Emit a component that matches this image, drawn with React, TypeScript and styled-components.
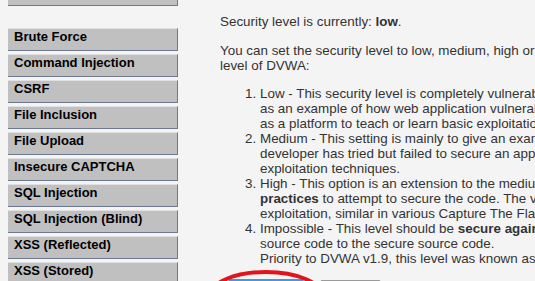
import styled, { createGlobalStyle } from "styled-components";

const GlobalStyle = createGlobalStyle`
  html, body {
    margin: 0;
    height: 100%;
    overflow: hidden;
    background: #f4f4f4;
  }
`;

const setupMenu = ["Setup / Reset DB"];
const vulnMenu = [
  "Brute Force",
  "Command Injection",
  "CSRF",
  "File Inclusion",
  "File Upload",
  "Insecure CAPTCHA",
  "SQL Injection",
  "SQL Injection (Blind)",
  "XSS (Reflected)",
  "XSS (Stored)",
];

function App() {
  return (
    <>
      <GlobalStyle />
      <Page>
        <Menu>
          <MenuBlock>
            {setupMenu.map(item => (
              <li key={item}><MenuItem href="#">{item}</MenuItem></li>
            ))}
          </MenuBlock>
          <MenuBlock>
            {vulnMenu.map(item => (
              <li key={item}><MenuItem href="#">{item}</MenuItem></li>
            ))}
          </MenuBlock>
        </Menu>

        <Body>
          <Para>Security level is currently: <b>low</b>.</Para>
          <Para>
            You can set the security level to low, medium, high or impossible. The security level changes the vulnerability<br />
            level of DVWA:
          </Para>
          <Levels>
            <li>
              Low - This security level is completely vulnerable and has no security measures at all. It's use is to be<br />
              as an example of how web application vulnerabilities manifest through bad coding practices and to serve<br />
              as a platform to teach or learn basic exploitation techniques.
            </li>
            <li>
              Medium - This setting is mainly to give an example to the user of bad security practices, where the<br />
              developer has tried but failed to secure an application. It also acts as a challenge to users to refine their<br />
              exploitation techniques.
            </li>
            <li>
              High - This option is an extension to the medium difficulty, with a mixture of harder or alternative <b>bad</b><br />
              <b>practices</b> to attempt to secure the code. The vulnerability may not allow the same extent of the<br />
              exploitation, similar in various Capture The Flag (CTFs) competitions.
            </li>
            <li>
              Impossible - This level should be <b>secure against all vulnerabilities</b>. It is used to compare the vulnerable<br />
              source code to the secure source code.<br />
              Priority to DVWA v1.9, this level was known as 'high'.
            </li>
          </Levels>
          <LevelForm action="#" method="POST">
            <LevelSelect name="security" defaultValue="low">
              <option value="low">Low</option>
              <option value="medium">Medium</option>
              <option value="high">High</option>
              <option value="impossible">Impossible</option>
            </LevelSelect>
            <SubmitButton type="submit" value="Submit" />
            <Annotation width="120" height="56" viewBox="0 0 120 56">
              <ellipse cx="60" cy="28" rx="56" ry="24" fill="none" stroke="#e3141c" strokeWidth="4" />
            </Annotation>
          </LevelForm>
        </Body>
      </Page>
    </>
  );
}

export default App;

const Page = styled.div`
  display: flex;
  align-items: flex-start;
`;

const Menu = styled.div`
  flex-shrink: 0;
  width: 170px;
  margin: -17px 0 0 8px;
`;

const MenuBlock = styled.ul`
  display: flex;
  flex-direction: column;
  gap: 3px;
  list-style: none;
  margin: 0 0 22px;
  padding: 0;
`;

const MenuItem = styled.a`
  display: block;
  box-sizing: border-box;
  width: 100%;
  height: 23px;
  line-height: 21px;
  padding-left: 6px;
  background: #c0c0c0;
  border-top: 1px solid #e0e0e0;
  border-bottom: 1px solid #6c7890;
  border-right: 1px solid #6c7890;
  color: #000;
  font: 700 13px "Liberation Sans", Arial, sans-serif;
  text-decoration: none;
  white-space: nowrap;
`;

const Body = styled.div`
  margin-left: 42px;
  padding-top: 1px;
  font-family: "Liberation Sans", Arial, sans-serif;
  font-size: 13.4px;
  line-height: 15px;
  color: #333;
  white-space: nowrap;
`;

const Para = styled.p`
  margin: 13.33px 0;
`;

const Levels = styled.ol`
  margin: 13.33px 0;
  padding-left: 40px;
`;

const LevelForm = styled.form`
  position: relative;
  display: flex;
  align-items: flex-start;
  gap: 16px;
  margin-top: 13px;
  padding-left: 8px;
`;

const LevelSelect = styled.select`
  width: 76px;
  height: 22px;
  border: 2px solid #3d9be6;
  border-radius: 3px;
  background: #fff;
  font: 13px "Liberation Sans", Arial, sans-serif;
`;

const SubmitButton = styled.input`
  width: 61px;
  height: 22px;
  margin-top: 1px;
  border: 1px solid #9a9a9a;
  border-radius: 2px;
  background: #e2e2e2;
  font: 13px "Liberation Sans", Arial, sans-serif;
`;

const Annotation = styled.svg`
  position: absolute;
  left: -14px;
  top: -11px;
  pointer-events: none;
`;
